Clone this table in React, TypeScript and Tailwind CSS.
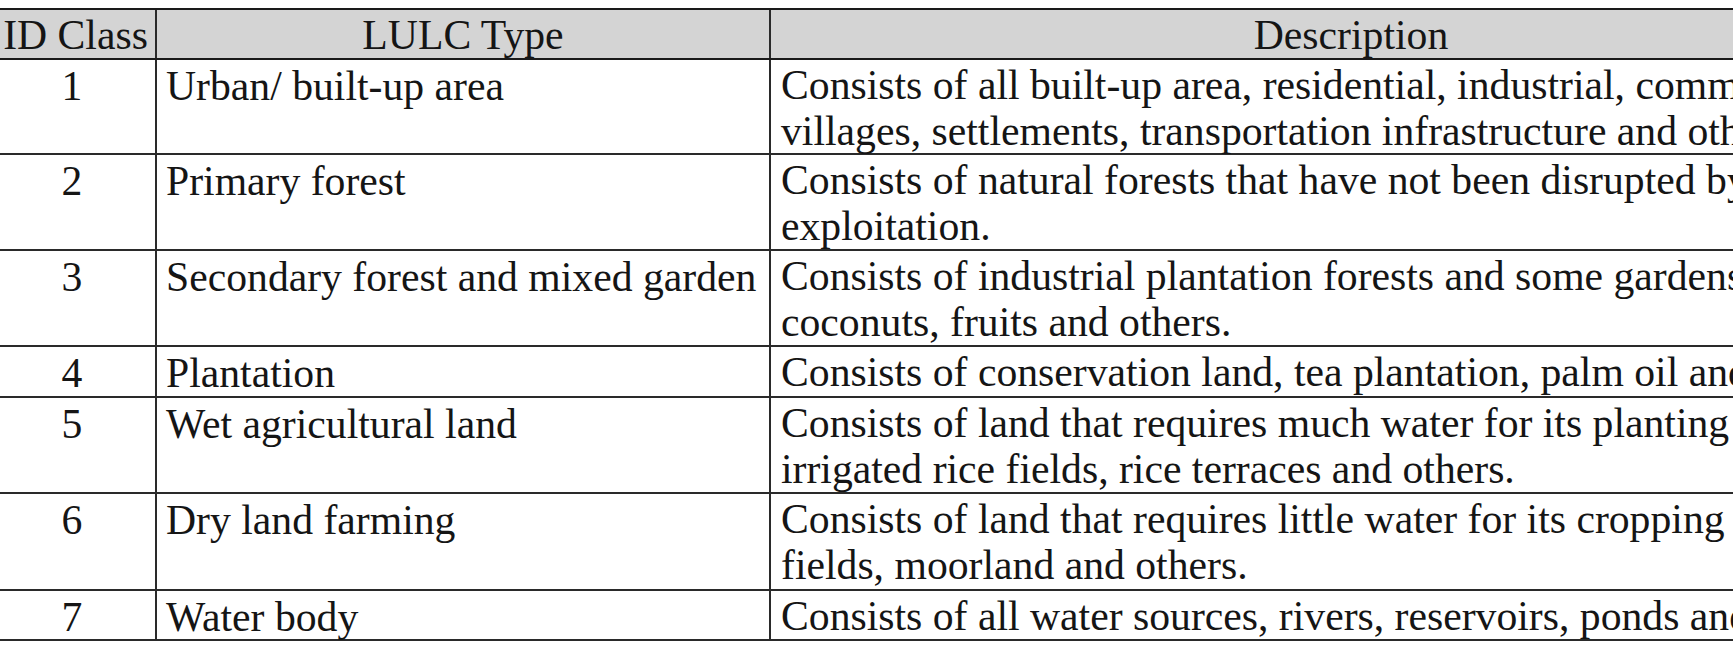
import React from "react";

interface Row {
    id: string;
    type: string;
    desc: string[];
    h: string;
}

const rows: Row[] = [
    {
        id: "1",
        type: "Urban/ built-up area",
        desc: [
            "Consists of all built-up area, residential, industrial, commercial, offices,",
            "villages, settlements, transportation infrastructure and others.",
        ],
        h: "h-[95px]",
    },
    {
        id: "2",
        type: "Primary forest",
        desc: ["Consists of natural forests that have not been disrupted by human", "exploitation."],
        h: "h-[96px]",
    },
    {
        id: "3",
        type: "Secondary forest and mixed garden",
        desc: ["Consists of industrial plantation forests and some gardens such as", "coconuts, fruits and others."],
        h: "h-[96px]",
    },
    {
        id: "4",
        type: "Plantation",
        desc: ["Consists of conservation land, tea plantation, palm oil and rubber."],
        h: "h-[51px]",
    },
    {
        id: "5",
        type: "Wet agricultural land",
        desc: ["Consists of land that requires much water for its planting such as", "irrigated rice fields, rice terraces and others."],
        h: "h-[96px]",
    },
    {
        id: "6",
        type: "Dry land farming",
        desc: ["Consists of land that requires little water for its cropping such as dry", "fields, moorland and others."],
        h: "h-[97px]",
    },
    {
        id: "7",
        type: "Water body",
        desc: ["Consists of all water sources, rivers, reservoirs, ponds and lakes."],
        h: "h-[50px]",
    },
];

export default function App() {
    return (
        <div className="w-[1733px] h-[653px] overflow-hidden bg-white pt-[8px] font-['Liberation_Serif',serif] text-[41.7px] leading-[46px] text-[#151515]">
            <div className="w-[1931px]">
                {/* header */}
                <div className="flex h-[52px] bg-[#d4d4d4] border-t-2 border-b-2 border-[#1a1a1a]">
                    <div className="w-[157px] shrink-0 pr-[4px] pt-[2px] text-center whitespace-nowrap border-r-2 border-[#2a2a2a]">
                        ID Class
                    </div>
                    <div className="w-[614px] shrink-0 pt-[2px] text-center border-r-2 border-[#2a2a2a]">LULC Type</div>
                    <div className="flex-1 pt-[2px] text-center">Description</div>
                </div>

                {rows.map((row) => (
                    <div key={row.id} className={`flex ${row.h} border-b-2 border-[#2a2a2a]`}>
                        <div className="w-[157px] shrink-0 pr-[11px] pt-[3px] text-center border-r-2 border-[#2a2a2a]">
                            {row.id}
                        </div>
                        <div className="w-[614px] shrink-0 pl-[9px] pt-[3px] whitespace-nowrap border-r-2 border-[#2a2a2a]">
                            {row.type}
                        </div>
                        <div className="flex-1 pl-[10px] pt-[2px]">
                            {row.desc.map((line, i) => (
                                <div key={i} className="whitespace-nowrap">
                                    {line}
                                </div>
                            ))}
                        </div>
                    </div>
                ))}
            </div>
        </div>
    );
}
